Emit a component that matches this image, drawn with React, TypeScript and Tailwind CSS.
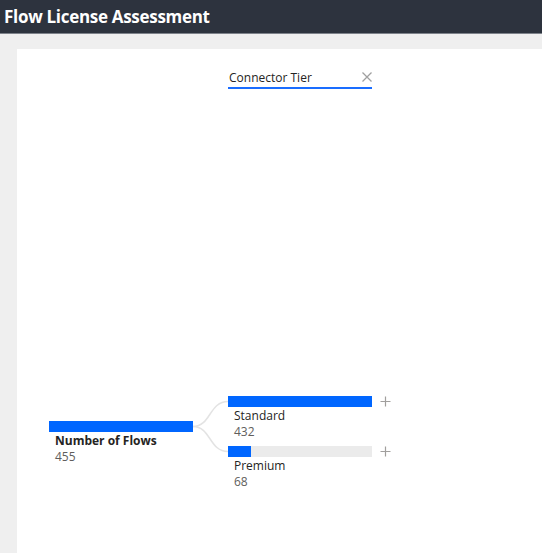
import { FC } from 'react';

interface NodeProps {
  label: string;
  value: number;
  pct: number;
  bold?: boolean;
  expandable?: boolean;
}

const TreeNode: FC<NodeProps> = ({ label, value, pct, bold, expandable }) => (
  <div className="relative h-[50px] w-[144px]">
    <div className="h-[11px] w-full bg-[#ebebeb]">
      <div className="h-full bg-[#0066ff]" style={{ width: `${pct}%` }} />
    </div>
    {expandable && (
      <svg
        className="absolute left-[152px] top-0 h-[11px] w-[11px]"
        viewBox="0 0 11 11"
        fill="none"
        stroke="#a19f9d"
        strokeWidth="1.2"
      >
        <path d="M5.5 0.5v10M0.5 5.5h10" />
      </svg>
    )}
    <div className="mt-[1px] pl-[6px] text-[12px] leading-[16px]">
      <div className={bold ? 'font-bold text-[#252423]' : 'text-[#252423]'}>{label}</div>
      <div className="text-[#605e5c]">{value}</div>
    </div>
  </div>
);

export default function App() {
  return (
    <div
      className="flex h-[553px] w-[542px] flex-col overflow-hidden bg-[#efefef]"
      style={{ fontFamily: '"Open Sans", "Noto Sans", sans-serif' }}
    >
      <div className="flex h-[34px] shrink-0 items-center border-b border-[#7d828a] bg-[#2d333e] pl-[4px]">
        <h1 className="text-[17px] font-bold leading-none tracking-[-0.3px] text-white">
          Flow License Assessment
        </h1>
      </div>
      <div className="ml-[17px] mt-[15px] flex flex-1 bg-white pl-[32px]">
        <div className="mt-[372px] w-[144px]">
          <TreeNode label="Number of Flows" value={455} pct={100} bold />
        </div>
        <svg className="mt-[347px] h-[61px] w-[35px] shrink-0" viewBox="0 0 35 61" fill="none" stroke="#e3e3e3" strokeWidth="1.5">
          <path d="M0 30.5C18 30.5 16 5.5 35 5.5" />
          <path d="M0 30.5C18 30.5 16 55.5 35 55.5" />
        </svg>
        <div className="w-[144px]">
          <div className="mt-[20px] flex h-[20px] items-end justify-between border-b-2 border-[#1a6dff] pb-[1px] pl-[1px]">
            <span className="text-[12px] leading-[16px] text-[#252423]">Connector Tier</span>
            <svg className="mb-[4px] h-[10px] w-[10px]" viewBox="0 0 10 10" fill="none" stroke="#a0a0a0" strokeWidth="1.3">
              <path d="M0.5 0.5l9 9M9.5 0.5l-9 9" />
            </svg>
          </div>
          <div className="mt-[307px]">
            <TreeNode label="Standard" value={432} pct={100} expandable />
            <TreeNode label="Premium" value={68} pct={15.7} expandable />
          </div>
        </div>
      </div>
    </div>
  );
}
